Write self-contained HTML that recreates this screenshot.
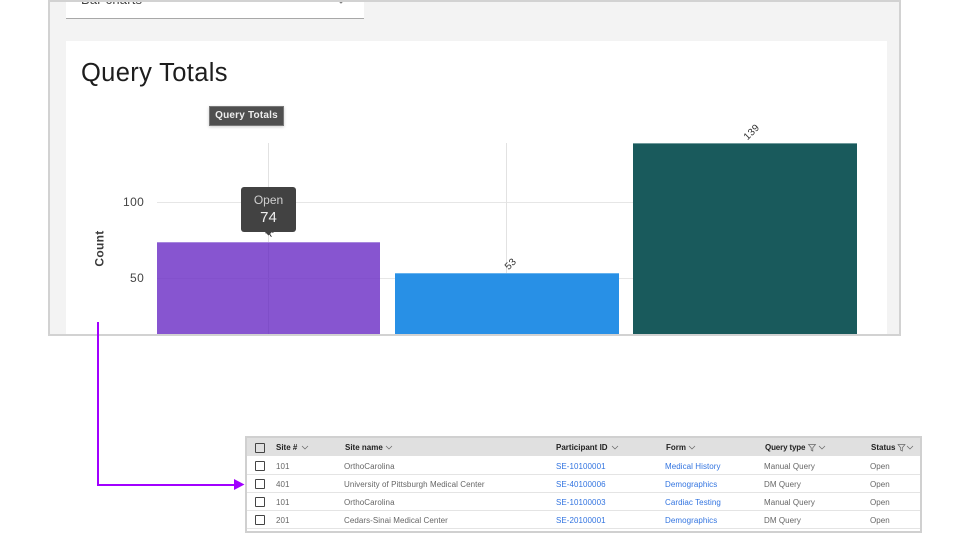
<!DOCTYPE html>
<html><head><meta charset="utf-8">
<style>
html,body{margin:0;padding:0;background:#fff;}
#p{position:relative;width:970px;height:539px;overflow:hidden;background:#fff;font-family:"Liberation Sans",sans-serif;}
.a{position:absolute;}
.t{position:absolute;white-space:nowrap;font-size:8px;line-height:18px;color:#666;margin-top:1px;letter-spacing:.06px;filter:blur(.25px);}
.h{color:#222;font-weight:bold;letter-spacing:0;}
.l{color:#3274e0;}
.c{position:absolute;left:255px;width:8px;height:8px;border:1px solid #444;border-radius:1px;}
</style></head><body>
<div id="p">
<!-- top frame -->
<div class="a" style="left:48px;top:0;width:853px;height:336px;box-sizing:border-box;border:2px solid #d2d2d2;background:#f3f3f3;"></div>
<div class="a" style="left:66px;top:0;width:298px;height:19px;box-sizing:border-box;background:#fff;border-bottom:1.5px solid #a8a8a8;"></div>
<div class="a" style="left:81px;top:-7px;font-size:13px;line-height:14px;color:#444;letter-spacing:.2px;filter:blur(.3px);">Bar charts</div>
<svg class="a" style="left:337px;top:0;" width="10" height="5" fill="none" stroke="#777" stroke-width="1"><path d="M1 0l3 3 3-3"/></svg>
<div class="a" style="left:48px;top:0;width:853px;height:2px;background:#d2d2d2;"></div>
<div class="a" style="left:66px;top:41px;width:821px;height:293px;background:#fff;"></div>
<div class="a" style="left:81px;top:57px;font-size:25.5px;line-height:32px;color:#1d1d1d;letter-spacing:.35px;filter:blur(.25px);">Query Totals</div>

<!-- grid -->
<div class="a" style="left:157px;top:202px;width:476px;height:1px;background:#e6e6e6;"></div>
<div class="a" style="left:380px;top:278px;width:253px;height:1px;background:#e6e6e6;"></div>
<div class="a" style="left:268px;top:143px;width:1px;height:191px;background:#e2e2e2;"></div>
<div class="a" style="left:506px;top:143px;width:1px;height:131px;background:#e2e2e2;"></div>

<!-- bars -->
<div class="a" style="left:157px;top:242px;width:223px;height:92px;background:#8755d0;border-top:1px solid #a787dd;box-sizing:border-box;"></div>
<div class="a" style="left:268px;top:243px;width:1px;height:91px;background:#7f4ec8;"></div>
<div class="a" style="left:157px;top:278px;width:223px;height:1px;background:#8351cc;"></div>
<div class="a" style="left:395px;top:273px;width:224px;height:61px;background:#2890e6;border-top:1px solid #66b2ee;box-sizing:border-box;"></div>
<div class="a" style="left:633px;top:143px;width:224px;height:191px;background:#195a5c;border-top:1px solid #6f9a9b;box-sizing:border-box;"></div>
<!-- baseline -->
<div class="a" style="left:66px;top:334px;width:835px;height:2px;background:#d2d2d2;"></div>

<!-- axis labels -->
<div class="a" style="left:123px;top:195px;font-size:12px;line-height:15px;color:#444;letter-spacing:.4px;filter:blur(.25px);">100</div>
<div class="a" style="left:130px;top:271px;font-size:12px;line-height:15px;color:#444;letter-spacing:.4px;filter:blur(.25px);">50</div>
<div class="a" style="left:75px;top:241px;width:50px;height:15px;font-size:12px;line-height:15px;font-weight:bold;color:#3a3a3a;text-align:center;transform:rotate(-90deg);letter-spacing:.3px;filter:blur(.25px);">Count</div>
<div class="a" style="left:501px;top:258px;width:20px;text-align:center;font-size:10px;line-height:13px;color:#333;transform:rotate(-45deg);letter-spacing:.3px;">53</div>
<div class="a" style="left:740px;top:126px;width:24px;text-align:center;font-size:10px;line-height:13px;color:#333;transform:rotate(-45deg);letter-spacing:.3px;">139</div>
<div class="a" style="left:262px;top:226px;width:20px;text-align:center;font-size:10px;line-height:13px;color:#222;transform:rotate(-45deg);">74</div>

<!-- tooltips -->
<div class="a" style="left:209px;top:106px;width:75px;height:20px;box-sizing:border-box;background:#4f4f4f;border:1px solid #777;box-shadow:0 1px 3px rgba(0,0,0,.2);color:#eee;font-size:10px;line-height:18px;text-align:center;letter-spacing:.2px;font-weight:bold;filter:blur(.2px);">Query Totals</div>
<div class="a" style="left:241px;top:187px;width:55px;height:45px;box-sizing:border-box;background:#424242;border-radius:3px;color:#d8d8d8;text-align:center;">
  <div style="font-size:12px;line-height:14px;margin-top:6px;color:#cfcfcf;">Open</div>
  <div style="font-size:15px;line-height:20px;margin-top:1px;color:#eee;">74</div>
</div>
<div class="a" style="left:265px;top:227px;width:7px;height:7px;background:#424242;transform:rotate(45deg);"></div>

<!-- arrow -->
<div class="a" style="left:97px;top:322px;width:2px;height:163px;background:#a100ff;"></div>
<div class="a" style="left:97px;top:484px;width:138px;height:2px;background:#a100ff;"></div>
<svg class="a" style="left:234px;top:478px;" width="12" height="13"><path d="M0 1 L10.500 6.500 L0 12 Z" fill="#a100ff"/></svg>

<!-- table -->
<div class="a" style="left:245px;top:436px;width:677px;height:97px;box-sizing:border-box;border:2px solid #d0d0d0;background:#fff;"></div>
<div class="a" style="left:247px;top:438px;width:673px;height:18px;background:#e0e0e0;"></div>
<div class="a" style="left:247px;top:474px;width:673px;height:1px;background:#e4e4e4;"></div>
<div class="a" style="left:247px;top:492px;width:673px;height:1px;background:#e4e4e4;"></div>
<div class="a" style="left:247px;top:510px;width:673px;height:1px;background:#e4e4e4;"></div>
<div class="a" style="left:247px;top:528px;width:673px;height:1px;background:#e4e4e4;"></div>

<!-- checkboxes -->
<div class="c" style="top:443px;"></div>
<div class="c" style="top:461px;"></div>
<div class="c" style="top:479px;"></div>
<div class="c" style="top:497px;"></div>
<div class="c" style="top:515px;"></div>

<!-- header text -->
<div class="t h" style="left:276px;top:438px;">Site #</div>
<div class="t h" style="left:345px;top:438px;">Site name</div>
<div class="t h" style="left:556px;top:438px;">Participant ID</div>
<div class="t h" style="left:666px;top:438px;">Form</div>
<div class="t h" style="left:765px;top:438px;letter-spacing:-.15px;">Query type</div>
<div class="t h" style="left:871px;top:438px;">Status</div>

<!-- header icons -->
<svg class="a" style="left:0;top:0;" width="970" height="539" fill="none" stroke="#666" stroke-width=".7">
<path d="M302 446l3 3 3-3M386 446l3 3 3-3M612 446l3 3 3-3M689 446l3 3 3-3M819 446l3 3 3-3M907 446l3 3 3-3"/>
<path d="M808.500 444.500h7l-2.700 3.300v3.200l-1.600-.8v-2.400zM898 444.500h7l-2.700 3.300v3.200l-1.600-.8v-2.400z"/>
</svg>

<!-- row 1 -->
<div class="t" style="left:276px;top:457px;">101</div>
<div class="t" style="left:344px;top:457px;">OrthoCarolina</div>
<div class="t l" style="left:556px;top:457px;">SE-10100001</div>
<div class="t l" style="left:665px;top:457px;">Medical History</div>
<div class="t" style="left:764px;top:457px;">Manual Query</div>
<div class="t" style="left:870px;top:457px;">Open</div>
<!-- row 2 -->
<div class="t" style="left:276px;top:475px;">401</div>
<div class="t" style="left:344px;top:475px;">University of Pittsburgh Medical Center</div>
<div class="t l" style="left:556px;top:475px;">SE-40100006</div>
<div class="t l" style="left:665px;top:475px;">Demographics</div>
<div class="t" style="left:764px;top:475px;">DM Query</div>
<div class="t" style="left:870px;top:475px;">Open</div>
<!-- row 3 -->
<div class="t" style="left:276px;top:493px;">101</div>
<div class="t" style="left:344px;top:493px;">OrthoCarolina</div>
<div class="t l" style="left:556px;top:493px;">SE-10100003</div>
<div class="t l" style="left:665px;top:493px;">Cardiac Testing</div>
<div class="t" style="left:764px;top:493px;">Manual Query</div>
<div class="t" style="left:870px;top:493px;">Open</div>
<!-- row 4 -->
<div class="t" style="left:276px;top:511px;">201</div>
<div class="t" style="left:344px;top:511px;">Cedars-Sinai Medical Center</div>
<div class="t l" style="left:556px;top:511px;">SE-20100001</div>
<div class="t l" style="left:665px;top:511px;">Demographics</div>
<div class="t" style="left:764px;top:511px;">DM Query</div>
<div class="t" style="left:870px;top:511px;">Open</div>
</div>
</body></html>
